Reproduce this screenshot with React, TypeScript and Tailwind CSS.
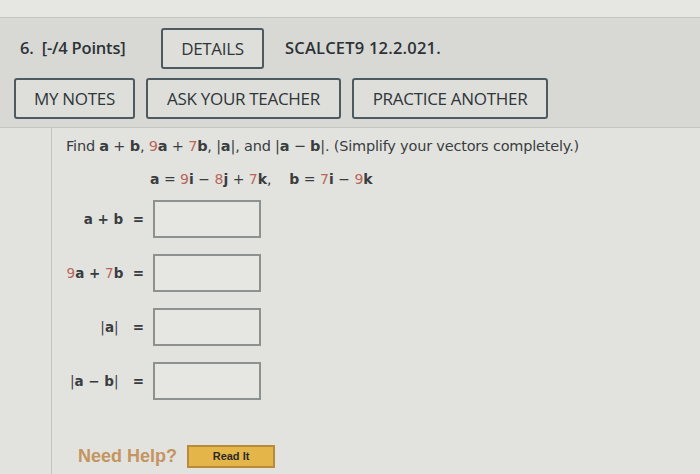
import React from 'react';

const red = 'text-[#b8665c]';

function Btn({ children, className = '' }: { children: React.ReactNode; className?: string }) {
    return (
        <div
            className={`h-[41px] flex items-center justify-center border-2 border-[#4d5a62] rounded-[3px] bg-[#dedfdb] text-[#2f3538] text-[17px] tracking-[-0.3px] ${className}`}
        >
            {children}
        </div>
    );
}

function Row({ label }: { label: React.ReactNode }) {
    return (
        <div className="flex items-center">
            <div className="w-[100px] text-right pr-[9px] text-[13.5px] font-bold text-[#3a3d3f]">{label}</div>
            <div className="w-[108px] h-[38px] border-2 border-[#8d918f] bg-[#e6e7e3]" />
        </div>
    );
}

export default function App() {
    return (
        <div className="w-[700px] h-[474px] overflow-hidden bg-[#e2e3df] flex flex-col" style={{ fontFamily: '"Open Sans", sans-serif' }}>
            <div className="h-[17px] bg-[#e6e6e2]" />
            {/* Header */}
            <div className="h-[111px] bg-[#d8d9d5] border-t border-b border-[#c4c6c3] pl-[14px] pt-[10px] flex flex-col gap-[9px]">
                <div className="flex items-center h-[41px]">
                    <span className="w-[147px] pl-[6px] text-[16.5px] font-semibold text-[#2d3236] tracking-[-0.2px]">6.&nbsp; [-/4 Points]</span>
                    <Btn className="w-[103px]">DETAILS</Btn>
                    <span className="ml-[21px] text-[16.5px] font-semibold text-[#2d3236] tracking-[0.2px]">SCALCET9 12.2.021.</span>
                </div>
                <div className="flex items-center gap-[11px]">
                    <Btn className="w-[121px]">MY NOTES</Btn>
                    <Btn className="w-[195px]">ASK YOUR TEACHER</Btn>
                    <Btn className="w-[196px]">PRACTICE ANOTHER</Btn>
                </div>
            </div>
            {/* Content */}
            <div className="flex-1 ml-[51px] border-l border-[#c2c4c1] pl-[14px] pt-[8px] text-[#3a3d3f]" style={{ fontFamily: '"DejaVu Sans", Verdana, sans-serif' }}>
                <p className="text-[14.5px] leading-[20px] tracking-[-0.2px]">
                    Find <b>a</b> + <b>b</b>, <span className={red}>9</span><b>a</b> + <span className={red}>7</span><b>b</b>, |<b>a</b>|, and |<b>a</b> − <b>b</b>|. (Simplify your vectors completely.)
                </p>
                <p className="mt-[14px] ml-[84px] text-[14px] leading-[18px]">
                    <b>a</b> = <span className={red}>9</span><b>i</b> − <span className={red}>8</span><b>j</b> + <span className={red}>7</span><b>k</b>,&nbsp;&nbsp;&nbsp;&nbsp;<b>b</b> = <span className={red}>7</span><b>i</b> − <span className={red}>9</span><b>k</b>
                </p>
                <div className="mt-[12px] ml-[-13px] flex flex-col gap-[16px]">
                    <Row label={<>a + b&nbsp;&nbsp;=</>} />
                    <Row label={<><span className={`${red} font-normal`}>9</span>a + <span className={`${red} font-normal`}>7</span>b&nbsp;&nbsp;=</>} />
                    <Row label={<><span className="font-normal">|</span>a<span className="font-normal">|</span>&nbsp;&nbsp;&nbsp;=</>} />
                    <Row label={<><span className="font-normal">|</span>a − b<span className="font-normal">|</span>&nbsp;&nbsp;&nbsp;=</>} />
                </div>
                <div className="mt-[43px] ml-[12px] flex items-center gap-[10px]">
                    <span className="text-[18px] font-bold text-[#c4955f]" style={{ fontFamily: '"Liberation Sans", Arial, sans-serif' }}>Need Help?</span>
                    <div className="w-[88px] h-[23px] bg-[#e4b64a] border-2 border-[#b98a3a] flex items-center justify-center text-[11px] font-bold text-[#2a2a26]" style={{ fontFamily: '"Liberation Sans", Arial, sans-serif' }}>
                        Read It
                    </div>
                </div>
            </div>
        </div>
    );
}
